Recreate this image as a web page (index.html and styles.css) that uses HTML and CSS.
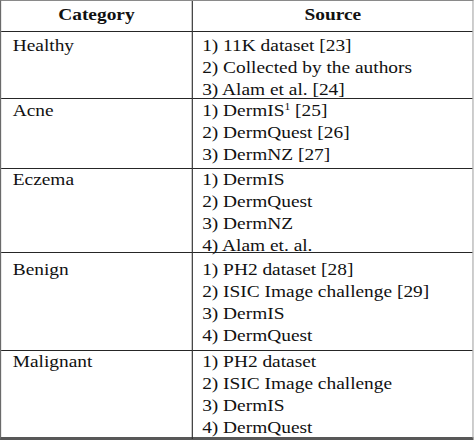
FILE: index.html
```html
<!DOCTYPE html>
<html>
<head>
<meta charset="utf-8">
<link rel="stylesheet" href="styles.css">
</head>
<body>
<div class="sheet">
  <div class="cell cat head">Category</div>
  <div class="cell src head">Source</div>

  <div class="cell cat r-healthy">Healthy</div>
  <div class="cell src r-healthy">
    <div>1) 11K dataset [23]</div>
    <div>2) Collected by the authors</div>
    <div>3) Alam et al. [24]</div>
  </div>

  <div class="cell cat r-acne">Acne</div>
  <div class="cell src r-acne">
    <div>1) DermIS<sup class="note">1</sup> [25]</div>
    <div>2) DermQuest [26]</div>
    <div>3) DermNZ [27]</div>
  </div>

  <div class="cell cat r-eczema">Eczema</div>
  <div class="cell src r-eczema">
    <div>1) DermIS</div>
    <div>2) DermQuest</div>
    <div>3) DermNZ</div>
    <div>4) Alam et. al.</div>
  </div>

  <div class="cell cat r-benign">Benign</div>
  <div class="cell src r-benign">
    <div>1) PH2 dataset [28]</div>
    <div>2) ISIC Image challenge [29]</div>
    <div>3) DermIS</div>
    <div>4) DermQuest</div>
  </div>

  <div class="cell cat r-malignant last">Malignant</div>
  <div class="cell src r-malignant last">
    <div>1) PH2 dataset</div>
    <div>2) ISIC Image challenge</div>
    <div>3) DermIS</div>
    <div>4) DermQuest</div>
  </div>
</div>
</body>
</html>
```

FILE: styles.css
```css
html, body {
  margin: 0;
  padding: 0;
  background: #ffffff;
}

.sheet {
  box-sizing: border-box;
  width: 410.4px;
  height: 440px;
  transform: scaleX(1.155);
  transform-origin: 0 0;
  display: grid;
  grid-template-columns: 166px 1fr;
  grid-template-rows: 31px 67px 70px 84px 98px 1fr;
  border-left: 1.8px solid #6a6a6a;
  border-top: 1px solid #8a8a8a;
  border-right: 1.8px solid #a9a9a9;
  border-bottom: 3px solid #585858;
  font-family: "Liberation Serif", "DejaVu Serif", serif;
  font-size: 16.8px;
  line-height: 22px;
  color: #111111;
  background: #ffffff;
}

.cell {
  box-sizing: border-box;
  border-bottom: 1px solid #262626;
  font-family: "Liberation Serif", "DejaVu Serif", serif;
}

.cell.last {
  border-bottom: none;
}

.cat {
  border-right: 1.7px solid #303030;
  padding-left: 10px;
}

.src {
  padding-left: 8px;
}

.head {
  font-weight: bold;
  text-align: center;
  padding-left: 0;
  padding-top: 3px;
}

.r-healthy { padding-top: 3px; }
.r-acne { padding-top: 1px; }
.r-eczema { padding-top: 0; }
.r-benign { padding-top: 6px; }
.r-malignant { padding-top: 0; }

.note {
  font-size: 10px;
  line-height: 0;
  vertical-align: 6px;
}
```
